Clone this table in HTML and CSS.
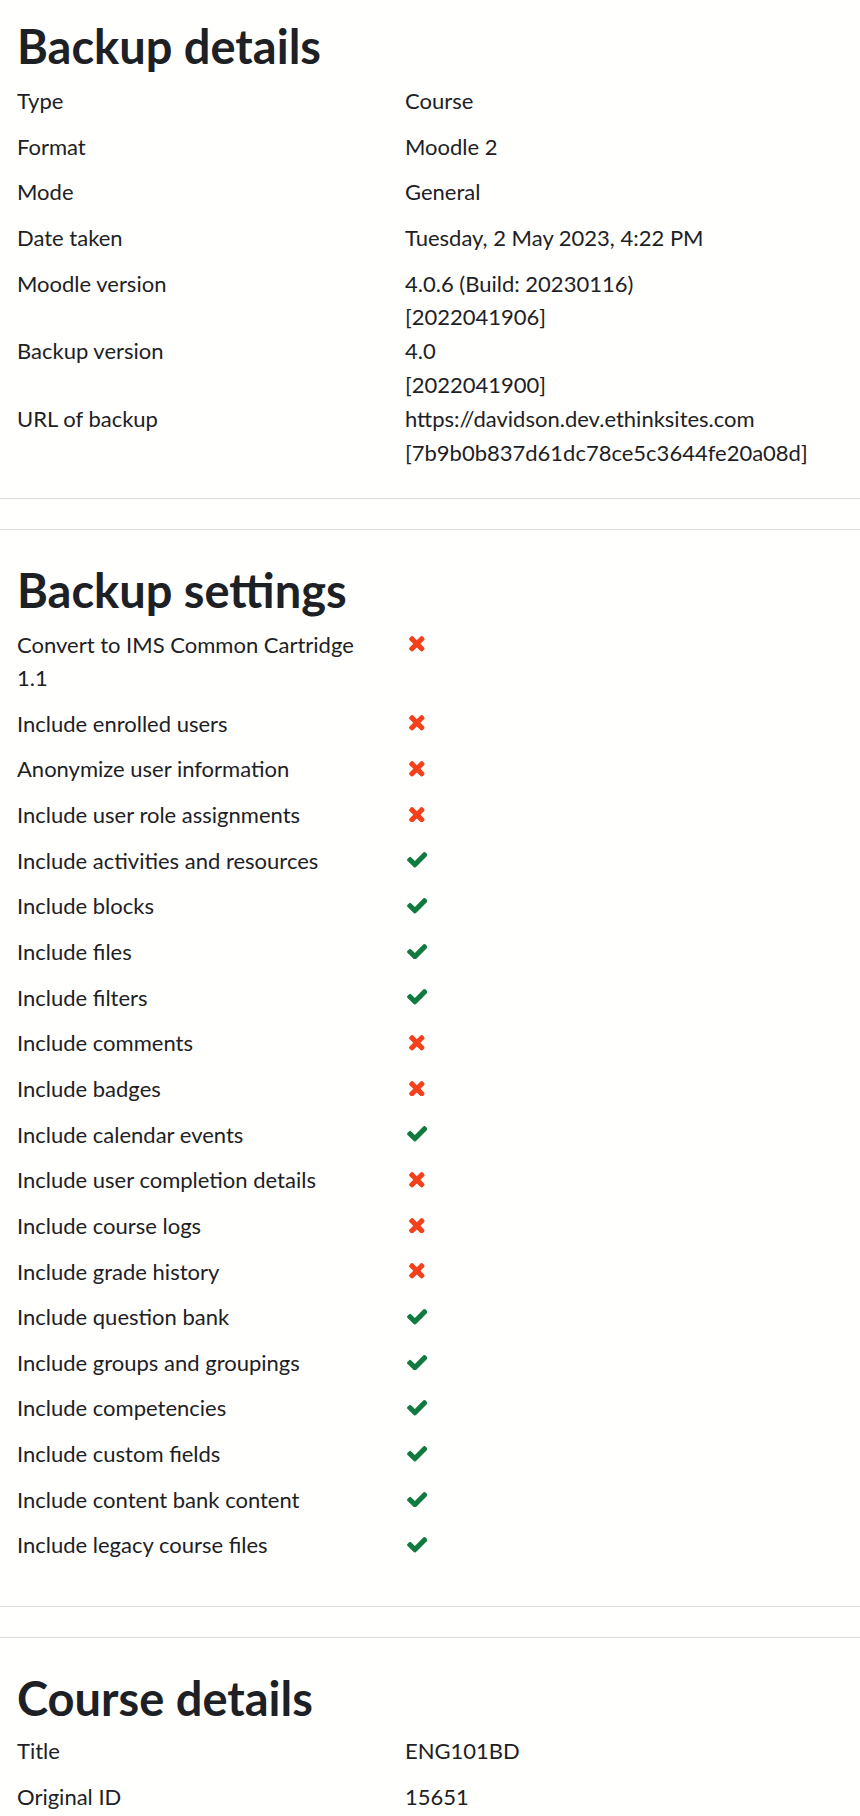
FILE: index.html
```html
<!DOCTYPE html>
<html lang="en">
<head>
<meta charset="utf-8">
<title>Backup details</title>
<link rel="stylesheet" href="styles.css">
</head>
<body>
<svg class="defs" width="0" height="0" aria-hidden="true">
  <defs>
    <symbol id="i-no" viewBox="302 366 1188 1188"><path d="M1490 1322q0 40-28 68l-136 136q-28 28-68 28t-68-28l-294-294-294 294q-28 28-68 28t-68-28l-136-136q-28-28-28-68t28-68l294-294-294-294q-28-28-28-68t28-68l136-136q28-28 68-28t68 28l294 294 294-294q28-28 68-28t68 28l136 136q28 28 28 68t-28 68l-294 294 294 294q28 28 28 68z"/></symbol>
    <symbol id="i-yes" viewBox="121 334 1550 1188"><path d="M1671 566q0 40-28 68l-724 724-136 136q-28 28-68 28t-68-28l-136-136-362-362q-28-28-28-68t28-68l136-136q28-28 68-28t68 28l294 295 656-657q28-28 68-28t68 28l136 136q28 28 28 68z"/></symbol>
  </defs>
</svg>

<section class="section">
  <h2 class="heading">Backup details</h2>
  <div class="pairs">
    <div class="pair"><div class="label">Type</div><div class="value">Course</div></div>
    <div class="pair"><div class="label">Format</div><div class="value">Moodle 2</div></div>
    <div class="pair"><div class="label">Mode</div><div class="value">General</div></div>
    <div class="pair"><div class="label">Date taken</div><div class="value">Tuesday, 2 May 2023, 4:22 PM</div></div>
    <div class="pair pair--multi"><div class="label">Moodle version</div><div class="value">4.0.6 (Build: 20230116)<br>[2022041906]</div></div>
    <div class="pair pair--multi"><div class="label">Backup version</div><div class="value">4.0<br>[2022041900]</div></div>
    <div class="pair pair--multi"><div class="label">URL of backup</div><div class="value">https://davidson.dev.ethinksites.com<br>[7b9b0b837d61dc78ce5c3644fe20a08d]</div></div>
  </div>
</section>

<section class="section">
  <h2 class="heading">Backup settings</h2>
  <div class="pairs pairs--settings">
    <div class="pair"><div class="label">Convert to IMS Common Cartridge 1.1</div><div class="value"><span class="icon icon--no"><svg class="svg-no"><use href="#i-no"/></svg></span></div></div>
    <div class="pair"><div class="label">Include enrolled users</div><div class="value"><span class="icon icon--no"><svg class="svg-no"><use href="#i-no"/></svg></span></div></div>
    <div class="pair"><div class="label">Anonymize user information</div><div class="value"><span class="icon icon--no"><svg class="svg-no"><use href="#i-no"/></svg></span></div></div>
    <div class="pair"><div class="label">Include user role assignments</div><div class="value"><span class="icon icon--no"><svg class="svg-no"><use href="#i-no"/></svg></span></div></div>
    <div class="pair"><div class="label">Include activities and resources</div><div class="value"><span class="icon icon--yes"><svg class="svg-yes"><use href="#i-yes"/></svg></span></div></div>
    <div class="pair"><div class="label">Include blocks</div><div class="value"><span class="icon icon--yes"><svg class="svg-yes"><use href="#i-yes"/></svg></span></div></div>
    <div class="pair"><div class="label">Include files</div><div class="value"><span class="icon icon--yes"><svg class="svg-yes"><use href="#i-yes"/></svg></span></div></div>
    <div class="pair"><div class="label">Include filters</div><div class="value"><span class="icon icon--yes"><svg class="svg-yes"><use href="#i-yes"/></svg></span></div></div>
    <div class="pair"><div class="label">Include comments</div><div class="value"><span class="icon icon--no"><svg class="svg-no"><use href="#i-no"/></svg></span></div></div>
    <div class="pair"><div class="label">Include badges</div><div class="value"><span class="icon icon--no"><svg class="svg-no"><use href="#i-no"/></svg></span></div></div>
    <div class="pair"><div class="label">Include calendar events</div><div class="value"><span class="icon icon--yes"><svg class="svg-yes"><use href="#i-yes"/></svg></span></div></div>
    <div class="pair"><div class="label">Include user completion details</div><div class="value"><span class="icon icon--no"><svg class="svg-no"><use href="#i-no"/></svg></span></div></div>
    <div class="pair"><div class="label">Include course logs</div><div class="value"><span class="icon icon--no"><svg class="svg-no"><use href="#i-no"/></svg></span></div></div>
    <div class="pair"><div class="label">Include grade history</div><div class="value"><span class="icon icon--no"><svg class="svg-no"><use href="#i-no"/></svg></span></div></div>
    <div class="pair"><div class="label">Include question bank</div><div class="value"><span class="icon icon--yes"><svg class="svg-yes"><use href="#i-yes"/></svg></span></div></div>
    <div class="pair"><div class="label">Include groups and groupings</div><div class="value"><span class="icon icon--yes"><svg class="svg-yes"><use href="#i-yes"/></svg></span></div></div>
    <div class="pair"><div class="label">Include competencies</div><div class="value"><span class="icon icon--yes"><svg class="svg-yes"><use href="#i-yes"/></svg></span></div></div>
    <div class="pair"><div class="label">Include custom fields</div><div class="value"><span class="icon icon--yes"><svg class="svg-yes"><use href="#i-yes"/></svg></span></div></div>
    <div class="pair"><div class="label">Include content bank content</div><div class="value"><span class="icon icon--yes"><svg class="svg-yes"><use href="#i-yes"/></svg></span></div></div>
    <div class="pair"><div class="label">Include legacy course files</div><div class="value"><span class="icon icon--yes"><svg class="svg-yes"><use href="#i-yes"/></svg></span></div></div>
  </div>
</section>

<section class="section section--course">
  <h2 class="heading">Course details</h2>
  <div class="pairs">
    <div class="pair"><div class="label">Title</div><div class="value">ENG101BD</div></div>
    <div class="pair"><div class="label">Original ID</div><div class="value">15651</div></div>
  </div>
</section>
</body>
</html>
```
FILE: styles.css
```css
html, body {
  margin: 0;
  padding: 0;
  background: #fffffd;
}

body {
  font-family: Lato, "Noto Sans", sans-serif;
  font-size: 22px;
  line-height: 33.4px;
  color: #1d2125;
}

.defs {
  position: absolute;
  width: 0;
  height: 0;
  overflow: hidden;
}

.section {
  padding: 18px 17px 28px;
  border-bottom: 1px solid #dededc;
}

.section + .section {
  margin-top: 30px;
  padding-top: 31.5px;
  border-top: 1px solid #dededc;
}

.heading {
  margin: 0 0 10px;
  font-size: 47px;
  line-height: 56px;
  font-weight: 700;
  color: #1d2125;
}

.section--course .heading {
  margin-bottom: 8.5px;
}

.pairs {
  display: flex;
  flex-direction: column;
}

.pairs--settings {
  margin-bottom: 4px;
}

.pair {
  display: grid;
  grid-template-columns: 388px 1fr;
  margin-bottom: 12.25px;
}

.pair--multi {
  margin-bottom: 1px;
}

.label {
  padding-right: 36px;
}

.value {
  white-space: nowrap;
}

.icon {
  display: inline-flex;
  width: 23.7px;
  height: 33.4px;
  align-items: center;
  justify-content: center;
  vertical-align: top;
}

.icon--no {
  color: #f5401c;
}

.icon--yes {
  color: #117a3e;
}

.svg-no {
  width: 15.7px;
  height: 15.7px;
  fill: currentColor;
}

.svg-yes {
  width: 20.5px;
  height: 15.7px;
  fill: currentColor;
}
```
